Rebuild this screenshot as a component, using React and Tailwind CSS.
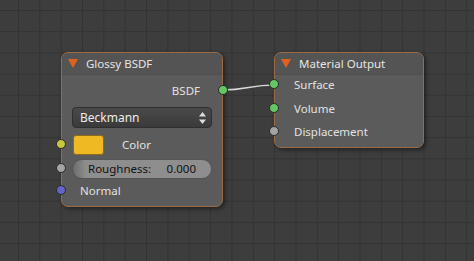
import React from "react";

function Socket({ color, className = "" }) {
  return (
    <span
      className={`absolute w-[10px] h-[10px] rounded-full border border-[#2a2a2a] ${className}`}
      style={{ backgroundColor: color }}
    />
  );
}

function Triangle() {
  return (
    <svg width="10" height="9" viewBox="0 0 10 9" className="shrink-0">
      <polygon points="0,0 10,0 5,9" fill="#e0601c" />
    </svg>
  );
}

export default function App() {
  return (
    <div
      className="relative w-[474px] h-[261px] overflow-hidden bg-[#3d3d3d] text-[11.5px] text-[#e2e2e2]"
      style={{
        fontFamily: '"Noto Sans", "Open Sans", sans-serif',
      }}
    >
      <div className="absolute inset-0 bg-[linear-gradient(to_right,#333333_1px,transparent_1px),linear-gradient(to_bottom,#333333_1px,transparent_1px)] bg-[size:21.35px_21.2px] bg-[position:18px_10px]" />

      {/* wire */}
      <svg className="absolute left-0 top-0" width="474" height="261">
        <path d="M222 90 C 248 90, 249 85, 275 85" stroke="#d8d8d8" strokeWidth="1.5" fill="none" />
      </svg>

      {/* Glossy BSDF node */}
      <div className="absolute left-[61px] top-[52px] w-[162px] h-[155px] rounded-[7px] border border-[#9a6b45] bg-[#5b5b5b] shadow-[2px_2px_4px_rgba(0,0,0,0.45)] flex flex-col">
        <div className="h-[22px] flex items-center gap-[8px] pl-[6px] rounded-t-[6px] bg-[#545454] border-b border-[#4e4e4e]">
          <Triangle />
          <span className="text-[#e4e4e4]">Glossy BSDF</span>
        </div>
        <div className="relative mt-[6px] h-[20px] flex items-center justify-end pr-[22px]">
          <span>BSDF</span>
          <Socket color="#63c763" className="right-[-6px] top-[4px]" />
        </div>
        <div className="mt-[6px] mx-[10px] h-[21px] rounded-[4px] border border-[#2f2f2f] bg-[linear-gradient(to_bottom,#4a4a4a,#3a3a3a)] flex items-center justify-between pl-[7px] pr-[5px] text-[#ececec] text-[12px]">
          <span>Beckmann</span>
          <svg width="7" height="12" viewBox="0 0 7 12">
            <polygon points="3.5,0 7,4.5 0,4.5" fill="#dcdcdc" />
            <polygon points="0,7.5 7,7.5 3.5,12" fill="#dcdcdc" />
          </svg>
        </div>
        <div className="relative mt-[7px] h-[20px] flex items-center pl-[11px]">
          <span className="w-[31px] h-[20px] rounded-[3px] bg-[#efb923] border border-[#8c6c1c]" />
          <span className="ml-[18px]">Color</span>
          <Socket color="#c7c73b" className="left-[-6px] top-[4px]" />
        </div>
        <div className="relative mt-[4px] h-[20px] mx-[10px]">
          <div className="h-full rounded-full bg-[linear-gradient(to_right,#6c6c6c_0px,#8e8e8e_13px)] border border-[#565656] flex items-center justify-between pl-[15px] pr-[15px] text-[#121212]">
            <span>Roughness:</span>
            <span>0.000</span>
          </div>
          <Socket color="#a3a3a3" className="left-[-16px] top-[4px]" />
        </div>
        <div className="relative mt-[3px] h-[18px] flex items-center pl-[18px]">
          <span>Normal</span>
          <Socket color="#6464c8" className="left-[-6px] top-[3px]" />
        </div>
      </div>

      {/* Material Output node */}
      <div className="absolute left-[274px] top-[52px] w-[150px] h-[96px] rounded-[7px] border border-[#9a6b45] bg-[#5b5b5b] shadow-[2px_2px_4px_rgba(0,0,0,0.45)] flex flex-col">
        <div className="h-[22px] flex items-center gap-[8px] pl-[6px] rounded-t-[6px] bg-[#545454] border-b border-[#4e4e4e]">
          <Triangle />
          <span className="text-[#e4e4e4]">Material Output</span>
        </div>
        <div className="relative -mt-[2px] h-[23.5px] flex items-center pl-[19px]">
          <span>Surface</span>
          <Socket color="#63c763" className="left-[-6px] top-[6px]" />
        </div>
        <div className="relative h-[23.5px] flex items-center pl-[19px]">
          <span>Volume</span>
          <Socket color="#63c763" className="left-[-6px] top-[6px]" />
        </div>
        <div className="relative h-[23.5px] flex items-center pl-[19px]">
          <span>Displacement</span>
          <Socket color="#a3a3a3" className="left-[-6px] top-[6px]" />
        </div>
      </div>
    </div>
  );
}
